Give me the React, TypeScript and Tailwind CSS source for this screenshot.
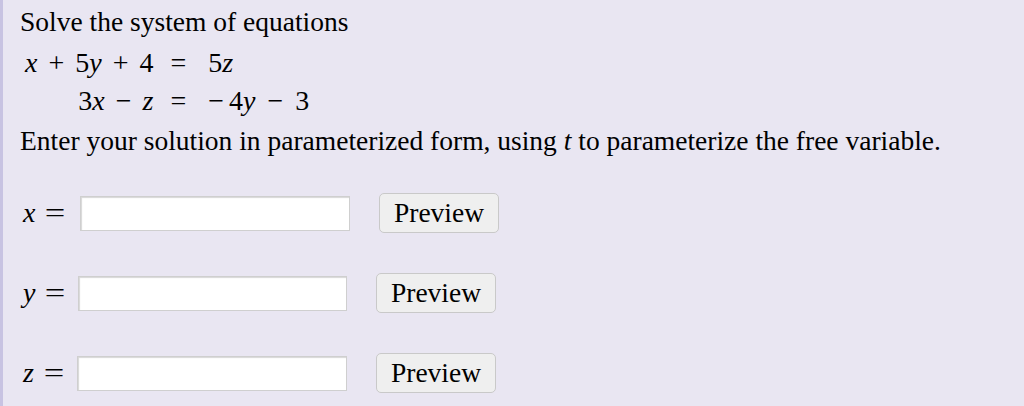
import React from 'react';

const serif = "font-['Liberation_Serif',serif]";

function V({ children }: { children: React.ReactNode }) {
  return <span className="font-['Liberation_Serif',serif] italic">{children}</span>;
}

function Op({ children }: { children: React.ReactNode }) {
  return <span className="font-['Liberation_Serif',serif] px-[11px]">{children}</span>;
}

function AnswerRow({ name, labelW, inputW }: { name: string; labelW: string; inputW: string }) {
  return (
    <div className="flex h-[40px] items-center">
      <div className={`flex items-center font-['Liberation_Serif',serif] text-[28px] ${labelW}`}>
        <V>{name}</V>
        <span className="ml-[12px] scale-x-[1.3]">=</span>
      </div>
      <input
        type="text"
        className={`h-[35px] border border-[#cfcfcf] bg-white outline-none shadow-[inset_1px_1px_1px_#d8d8d8] ${inputW}`}
      />
      <button
        type="button"
        className="ml-[29px] h-[40px] w-[120px] rounded-[5px] border border-[#c9c9c9] bg-[#efefef] font-['Liberation_Serif',serif] text-[27.5px] leading-none text-black"
      >
        Preview
      </button>
    </div>
  );
}

export default function App() {
  return (
    <div className={`${serif} h-[406px] w-[1024px] overflow-hidden border-l-[3px] border-[#c8c3e2] bg-[#e9e6f2] text-black`}>
      <div className="pl-[17px] pt-[3px]">
        <div className="text-[27.5px] leading-[38px]">Solve the system of equations</div>
        <table className="mt-[3px] font-['Liberation_Serif',serif] text-[28px] leading-[38px]">
          <tbody>
            <tr>
              <td className="pl-[5px] text-right font-['Liberation_Serif',serif]">
                <V>x</V>
                <Op>+</Op>5<V>y</V>
                <Op>+</Op>4
              </td>
              <td className="pl-[17px] pr-[22px] text-center font-['Liberation_Serif',serif]">=</td>
              <td className="text-left font-['Liberation_Serif',serif]">
                5<V>z</V>
              </td>
            </tr>
            <tr>
              <td className="text-right font-['Liberation_Serif',serif]">
                3<V>x</V>
                <Op>−</Op>
                <V>z</V>
              </td>
              <td className="pl-[17px] pr-[22px] text-center font-['Liberation_Serif',serif]">=</td>
              <td className="text-left font-['Liberation_Serif',serif]">
                <span className="mr-[5px]">−</span>4<V>y</V>
                <span className="px-[12px]">−</span>3
              </td>
            </tr>
          </tbody>
        </table>
        <div className="mt-[2px] text-[27.5px] leading-[38px]">
          Enter your solution in parameterized form, using <V>t</V> to parameterize the free variable.
        </div>
        <div className="mt-[33px] flex flex-col gap-[40px] pl-[3px]">
          <AnswerRow name="x" labelW="w-[57px]" inputW="w-[270px]" />
          <AnswerRow name="y" labelW="w-[55px]" inputW="w-[269px]" />
          <AnswerRow name="z" labelW="w-[54px]" inputW="w-[270px]" />
        </div>
      </div>
    </div>
  );
}
